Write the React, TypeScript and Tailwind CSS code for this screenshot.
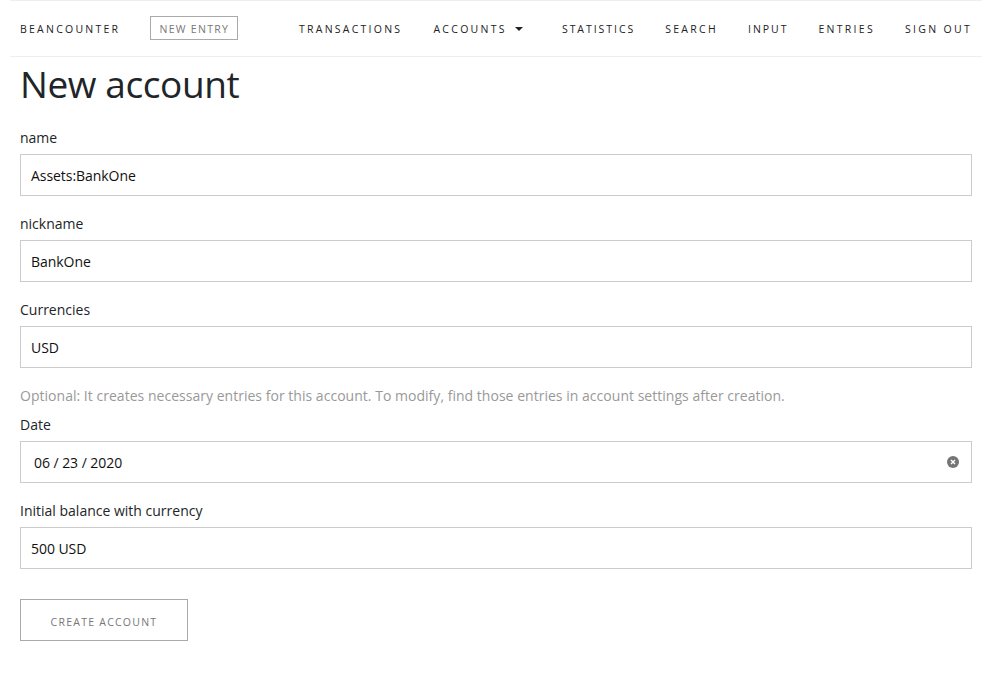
import React from "react";

function Label({ children }: { children: React.ReactNode }) {
  return <label className="mb-[4px] block h-[24px] text-[14px] leading-[24px] text-[#212529]">{children}</label>;
}

function Field({ label, value, className }: { label: string; value: string; className?: string }) {
  return (
    <div className={className}>
      <Label>{label}</Label>
      <input
        readOnly
        value={value}
        className="block h-[42px] w-full border border-[#cccccc] bg-white px-[10px] text-[14px] tracking-[-0.05px] text-[#111111] outline-none"
      />
    </div>
  );
}

export default function App() {
  return (
    <div className="min-h-[683px] bg-white font-['Open_Sans','Noto_Sans',sans-serif]">
      <div className="mx-[10px]">
        <nav className="flex h-[57px] items-center border-y border-[#eeeeee] px-[10px]">
          <a className="pt-[2px] text-[10.5px] tracking-[2.25px] whitespace-nowrap text-[#222222]">BEANCOUNTER</a>
          <a className="mb-[1px] ml-[30px] flex h-[24px] w-[88px] items-center justify-center border border-[#aaaaaa] pt-[3px] text-[10.5px] tracking-[1.3px] whitespace-nowrap text-[#777777]">
            NEW ENTRY
          </a>
          <div className="ml-auto flex items-center gap-[30px] text-[10.5px] whitespace-nowrap text-[#222222]">
            <a className="mr-[1px] pt-[2px] tracking-[2.25px]">TRANSACTIONS</a>
            <div className="flex items-center">
              <a className="pt-[2px] tracking-[2.3px]">ACCOUNTS</a>
              <span className="mr-[9px] ml-[8px] h-0 w-0 border-x-[4.5px] border-t-[4.5px] border-x-transparent border-t-[#222222]" />
            </div>
            <a className="pt-[2px] tracking-[1.95px]">STATISTICS</a>
            <a className="pt-[2px] tracking-[2.3px]">SEARCH</a>
            <a className="pt-[2px] tracking-[1.95px]">INPUT</a>
            <a className="pt-[2px] tracking-[2.3px]">ENTRIES</a>
            <a className="pt-[2px] tracking-[2.3px]">SIGN OUT</a>
          </div>
        </nav>
        <main className="px-[10px]">
          <h1 className="mt-[2px] mb-[17px] h-[50px] text-[37px] leading-[50px] font-normal tracking-[-0.4px] text-[#212529]">New account</h1>
          <div>
            <Field className="mb-[16px]" label="name" value="Assets:BankOne" />
            <Field className="mb-[16px]" label="nickname" value="BankOne" />
            <Field label="Currencies" value="USD" />
            <p className="mt-[16px] h-[29px] text-[14px] leading-[24px] tracking-[0.025px] text-[#999999]">
              Optional: It creates necessary entries for this account. To modify, find those entries in account settings after creation.
            </p>
            <div className="mb-[16px]">
              <Label>Date</Label>
              <div className="flex h-[42px] items-center justify-between border border-[#cccccc] pr-[12px] pl-[13px] text-[14px] tracking-[-0.05px] text-[#111111]">
                <span>06 / 23 / 2020</span>
                <svg width="12" height="12" viewBox="0 0 12 12">
                  <circle cx="6" cy="6" r="6" fill="#757575" />
                  <path d="M4 4l4 4M8 4l-4 4" stroke="#ffffff" strokeWidth="1.4" />
                </svg>
              </div>
            </div>
            <Field label="Initial balance with currency" value="500 USD" />
          </div>
          <button className="mt-[30px] flex h-[42px] w-[168px] items-center justify-center border border-[#aaaaaa] pt-[5px] text-[10.5px] tracking-[1.25px] text-[#777777]">
            CREATE ACCOUNT
          </button>
        </main>
      </div>
    </div>
  );
}
